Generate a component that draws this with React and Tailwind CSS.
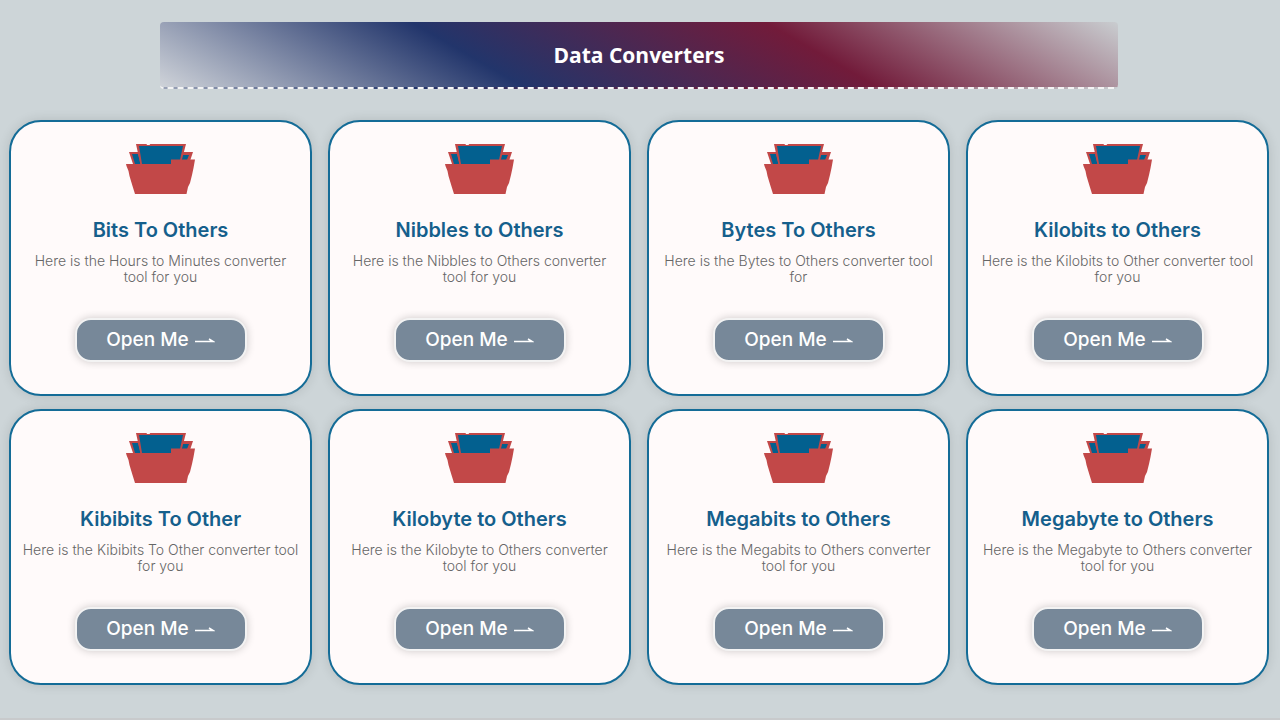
const converters = [
  { id: 1, title: "Bits To Others", text: "Here is the Hours to Minutes converter tool for you" },
  { id: 2, title: "Nibbles to Others", text: "Here is the Nibbles to Others converter tool for you" },
  { id: 3, title: "Bytes To Others", text: "Here is the Bytes to Others converter tool for" },
  { id: 4, title: "Kilobits to Others", text: "Here is the Kilobits to Other converter tool for you" },
  { id: 5, title: "Kibibits To Other", text: "Here is the Kibibits To Other converter tool for you" },
  { id: 6, title: "Kilobyte to Others", text: "Here is the Kilobyte to Others converter tool for you" },
  { id: 7, title: "Megabits to Others", text: "Here is the Megabits to Others converter tool for you" },
  { id: 8, title: "Megabyte to Others", text: "Here is the Megabyte to Others converter tool for you" },
];

function FolderIcon() {
  return (
    <svg width="70" height="52" viewBox="0 0 70 52" aria-hidden="true">
      <path d="M3 9H67L62 24H8Z" fill="#c24848" />
      <path d="M6 11H12L14.500 21H9Z M56 12H63L61 17H55Z" fill="#03608f" />
      <path d="M10 1H60L54 24H15Z" fill="#c24848" />
      <path d="M13 3H57L54 17H45V21H16Z" fill="#03608f" />
      <path d="M20 0H25L23.500 2H21Z" fill="#fffafa" />
      <path d="M0 21H45V16.500H69L67.500 25L66 32L64 40L62 44L60.500 51H9L6.500 43L3.500 33L2.500 28L0.500 23Z" fill="#c24848" />
    </svg>
  );
}

function ConverterCard({ title, text }) {
  return (
    <article className="flex flex-col items-center rounded-[32px] border-2 border-[#146c97] bg-[#fffafa] px-2.5 pt-[21px] pb-8 text-center shadow-[0_0_12px_rgba(0,0,0,0.12)]">
      <FolderIcon />
      <h2 className="mt-[23px] text-[20px] leading-6 font-semibold text-[#155f8c]">{title}</h2>
      <p className="mt-[11px] min-h-8 text-[14px] leading-4 font-light text-[#666666]">{text}</p>
      <button
        type="button"
        className="mt-[33px] flex h-11 w-[172px] items-center justify-center gap-1.5 rounded-2xl border-2 border-[#f3f3f3] bg-[#778899] text-[19px] font-medium text-white shadow-[0_0_8px_rgba(0,0,0,0.2)]"
      >
        Open Me
        <svg width="20" height="8" viewBox="0 0 20 8" fill="none" stroke="currentColor" strokeWidth="1.500" aria-hidden="true">
          <path d="M0 5.500H18L14 3" />
        </svg>
      </button>
    </article>
  );
}

function App() {
  return (
    <main className="border-b-2 border-[#c8cacc] bg-[#cdd5d8] pt-[22px] pr-0.5 pb-[33px] font-[Inter,sans-serif]">
      <h1 className="mx-auto w-3/4 rounded border-b-2 border-dashed border-[#f4f4f4] bg-[linear-gradient(30deg,#cfd3d9,#22356b_34%,#721b3a_67%,#c9cdd0)] pt-[21px] pb-[19px] text-center font-['Open_Sans',sans-serif] text-[21px] leading-[25px] font-bold text-white">
        Data Converters
      </h1>
      <section className="mt-[31px] grid grid-cols-4 gap-x-4 gap-y-[13px] px-[9px]">
        {converters.map((item) => (
          <ConverterCard key={item.id} title={item.title} text={item.text} />
        ))}
      </section>
    </main>
  );
}

export default App;
